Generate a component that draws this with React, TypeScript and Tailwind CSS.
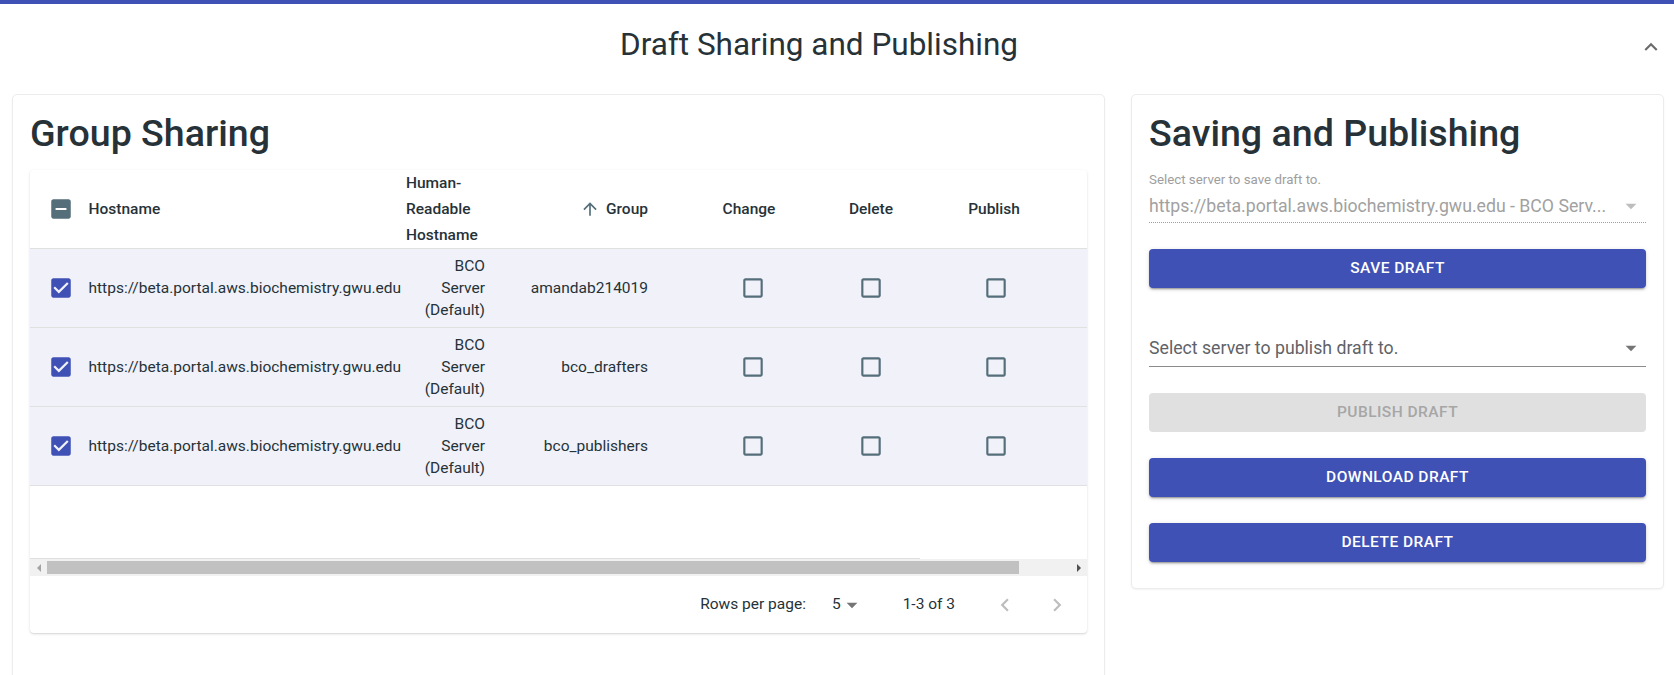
import React from "react";

const rows = [
  { host: "https://beta.portal.aws.biochemistry.gwu.edu", group: "amandab214019" },
  { host: "https://beta.portal.aws.biochemistry.gwu.edu", group: "bco_drafters" },
  { host: "https://beta.portal.aws.biochemistry.gwu.edu", group: "bco_publishers" },
];

function Icon({ d, size = 26, className = "" }: { d: string; size?: number; className?: string }) {
  return (
    <svg width={size} height={size} viewBox="0 0 24 24" className={className} fill="currentColor">
      <path d={d} />
    </svg>
  );
}

const CHECKED =
  "M19 3H5c-1.11 0-2 .9-2 2v14c0 1.1.89 2 2 2h14c1.11 0 2-.9 2-2V5c0-1.1-.89-2-2-2zm-9 14l-5-5 1.41-1.41L10 14.17l7.59-7.59L19 8l-9 9z";
const BLANK =
  "M19 5v14H5V5h14m0-2H5c-1.1 0-2 .9-2 2v14c0 1.1.9 2 2 2h14c1.1 0 2-.9 2-2V5c0-1.1-.9-2-2-2z";
const INDETERMINATE =
  "M19 3H5c-1.1 0-2 .9-2 2v14c0 1.1.9 2 2 2h14c1.1 0 2-.9 2-2V5c0-1.1-.9-2-2-2zm-2 10H7v-2h10v2z";
const ARROW_UP = "M4 12l1.41 1.41L11 7.83V20h2V7.83l5.58 5.59L20 12l-8-8-8 8z";
const DROP = "M7 10l5 5 5-5z";
const EXPAND_LESS = "M12 8l-6 6 1.41 1.41L12 10.83l4.59 4.58L18 14z";
const CHEV_LEFT = "M15.41 7.41L14 6l-6 6 6 6 1.41-1.41L10.83 12z";
const CHEV_RIGHT = "M10 6L8.59 7.41 13.17 12l-4.58 4.59L10 18l6-6z";

const cols = "grid grid-cols-[51px_325px_87px_198px_120px_120px_126px_1fr]";

function GroupSharing() {
  return (
    <div className="flex-1 rounded-[5px] border border-[#ececec] bg-white px-[17px] pt-[15px] pb-[80px] shadow-[0_1px_2px_rgba(0,0,0,0.05)]">
      <h2 className="mb-[14px] text-[37.6px] font-medium leading-[1.235] text-[#263238]">Group Sharing</h2>
      <div className="overflow-hidden rounded-[4px] bg-white shadow-[0_1px_3px_rgba(0,0,0,0.13),0_1px_1px_rgba(0,0,0,0.06)]">
        {/* header */}
        <div className={`${cols} h-[79px] border-b border-[#e0e0e0] text-[15.5px] font-medium text-[#263238]`}>
          <div className="flex items-center pl-[18px]">
            <Icon d={INDETERMINATE} className="text-[#546e7a]" />
          </div>
          <div className="flex items-center pl-[7.5px]">Hostname</div>
          <div className="flex flex-col justify-center leading-[26px]">
            <span>Human-</span>
            <span>Readable</span>
            <span>Hostname</span>
          </div>
          <div className="flex items-center justify-end gap-[6px] pr-[43px]">
            <Icon d={ARROW_UP} size={20} className="text-[#546e7a]" />
            <span>Group</span>
          </div>
          <div className="flex items-center justify-center pr-[4px]">Change</div>
          <div className="flex items-center justify-center">Delete</div>
          <div className="flex items-center justify-center">Publish</div>
          <div />
        </div>
        {/* rows */}
        {rows.map((r, i) => (
          <div
            key={i}
            className={`${cols} h-[79px] border-b border-[#e0e0e0] bg-[#f0f1f9] text-[15.5px] text-[#263238]`}
          >
            <div className="flex items-center pl-[18px]">
              <Icon d={CHECKED} className="text-[#3f51b5]" />
            </div>
            <div className="flex items-center whitespace-nowrap pl-[7.5px]">{r.host}</div>
            <div className="flex flex-col items-end justify-center pr-[8px] leading-[22px]">
              <span>BCO</span>
              <span>Server</span>
              <span>(Default)</span>
            </div>
            <div className="flex items-center justify-end pr-[43px]">{r.group}</div>
            <div className="flex items-center justify-center pl-[4px]">
              <Icon d={BLANK} className="text-[#546e7a]" />
            </div>
            <div className="flex items-center justify-center">
              <Icon d={BLANK} className="text-[#546e7a]" />
            </div>
            <div className="flex items-center justify-center pl-[4px]">
              <Icon d={BLANK} className="text-[#546e7a]" />
            </div>
            <div />
          </div>
        ))}
        {/* empty space */}
        <div className="h-[72px]" />
        <div className="h-px w-[890px] bg-[#e0e0e0]" />
        {/* scrollbar */}
        <div className="flex h-[17px] items-center bg-[#f1f1f1]">
          <div className="flex w-[17px] items-center justify-center">
            <div className="h-0 w-0 border-y-[4px] border-r-[4px] border-y-transparent border-r-[#a3a3a3]" />
          </div>
          <div className="h-[13px] w-[972px] bg-[#c1c1c1]" />
          <div className="flex-1" />
          <div className="flex w-[17px] items-center justify-center">
            <div className="h-0 w-0 border-y-[4px] border-l-[4px] border-y-transparent border-l-[#505050]" />
          </div>
        </div>
        {/* pagination */}
        <div className="flex h-[57px] items-center justify-end pr-[17px] text-[15.5px] text-[#263238]">
          <span>Rows per page:</span>
          <div className="ml-[26px] flex items-center">
            <span>5</span>
            <Icon d={DROP} size={26} className="-ml-[2px] text-[#757575]" />
          </div>
          <span className="ml-[38px]">1-3 of 3</span>
          <Icon d={CHEV_LEFT} size={26} className="ml-[37px] text-[#bdbdbd]" />
          <Icon d={CHEV_RIGHT} size={26} className="ml-[26px] text-[#bdbdbd]" />
        </div>
      </div>
    </div>
  );
}

function Btn({ label, disabled = false }: { label: string; disabled?: boolean }) {
  return (
    <button
      className={`mt-[26px] flex h-[39px] w-full items-center justify-center rounded-[4px] text-[15.5px] font-medium uppercase tracking-[0.03em] ${
        disabled
          ? "bg-[#e0e0e0] text-[#a6a6a6]"
          : "bg-[#3f51b5] text-white shadow-[0_3px_1px_-2px_rgba(0,0,0,0.2),0_2px_2px_0_rgba(0,0,0,0.14),0_1px_5px_0_rgba(0,0,0,0.12)]"
      }`}
    >
      {label}
    </button>
  );
}

function SavingPublishing() {
  return (
    <div className="w-[533px] self-start rounded-[5px] border border-[#ececec] bg-white px-[17px] pt-[15px] pb-[26px] shadow-[0_1px_2px_rgba(0,0,0,0.05)]">
      <h2 className="text-[37.6px] font-medium leading-[1.235] text-[#263238]">Saving and Publishing</h2>
      <div className="mt-[16px] h-[16px] text-[13.3px] leading-[16px] text-[#9e9e9e]">Select server to save draft to.</div>
      <div className="mt-[5px] flex h-[30px] items-start border-b border-dotted border-[#9e9e9e] pb-[5px]">
        <div className="flex h-[25px] flex-1 items-center overflow-hidden whitespace-nowrap text-[17.7px] text-[#a1a1a1]">
          https://beta.portal.aws.biochemistry.gwu.edu - BCO Serv...
        </div>
        <Icon d={DROP} size={26} className="mr-[2px] text-[#bdbdbd]" />
      </div>
      <Btn label="Save Draft" />
      <div className="mt-[48px] flex h-[31px] items-start border-b border-[#8b8b8b] pb-[6px]">
        <div className="flex h-[24px] flex-1 items-center whitespace-nowrap text-[17.7px] text-[#5f6368]">
          Select server to publish draft to.
        </div>
        <Icon d={DROP} size={26} className="mr-[2px] -mt-[1px] text-[#757575]" />
      </div>
      <Btn label="Publish Draft" disabled />
      <Btn label="Download Draft" />
      <Btn label="Delete Draft" />
    </div>
  );
}

export default function App() {
  return (
    <div className="h-[675px] overflow-hidden border-t-4 border-[#3f51b5] bg-white font-['Roboto',sans-serif]">
      <div className="flex h-[86px] items-center pr-[10px]">
        <h1 className="flex-1 pb-[4px] text-center text-[31.5px] font-normal text-[#263238]">Draft Sharing and Publishing</h1>
        <Icon d={EXPAND_LESS} size={26} className="text-[#6b6b6b]" />
      </div>
      <div className="mt-[4px] flex gap-[26px] pr-[10px] pl-[12px]">
        <GroupSharing />
        <SavingPublishing />
      </div>
    </div>
  );
}
